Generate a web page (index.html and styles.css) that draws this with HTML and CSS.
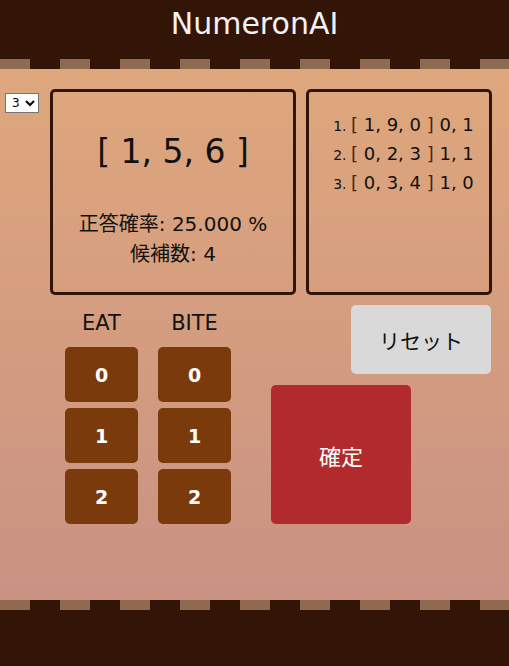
FILE: index.html
```html
<!DOCTYPE html>
<html lang="ja">
  <head>
    <meta charset="utf-8"/>
    <title>NumeronAI</title>
    <link rel="stylesheet" href="styles.css">
  </head>
  <body>
    <header>
      <h1>NumeronAI</h1>
    </header>
    <div class="stripe"></div>

    <main>
      <div class="row top">
        <select class="digits">
          <option>3</option>
          <option>4</option>
        </select>

        <div class="card guess">
          <div class="guessNum">[ 1, 5, 6 ]</div>
          <div class="info">正答確率: 25.000 %</div>
          <div class="info">候補数: 4</div>
        </div>

        <div class="card history">
          <ol>
            <li><span class="br">[</span> 1, 9, 0 <span class="br">]</span> 0, 1</li>
            <li><span class="br">[</span> 0, 2, 3 <span class="br">]</span> 1, 1</li>
            <li><span class="br">[</span> 0, 3, 4 <span class="br">]</span> 1, 0</li>
          </ol>
        </div>
      </div>

      <div class="row bottom">
        <div class="counter">
          <div class="label">EAT</div>
          <button class="num">0</button>
          <button class="num">1</button>
          <button class="num">2</button>
        </div>
        <div class="counter">
          <div class="label">BITE</div>
          <button class="num">0</button>
          <button class="num">1</button>
          <button class="num">2</button>
        </div>
        <div class="actions">
          <button class="reset">リセット</button>
          <button class="submit">確定</button>
        </div>
      </div>
    </main>

    <div class="stripe"></div>
    <footer></footer>
  </body>
</html>
```

FILE: styles.css
```css
* {
  box-sizing: border-box;
}

html, body {
  margin: 0;
  height: 100%;
}

body {
  display: flex;
  flex-direction: column;
  font-family: "DejaVu Sans", "Noto Sans CJK JP", sans-serif;
  color: #111;
  background-color: #331507;
}

header {
  height: 59px;
  background-color: #331507;
  color: #f2f2f2;
  text-align: center;
}

header h1 {
  margin: 0;
  font-size: 30px;
  font-weight: normal;
  line-height: 48px;
}

/* checkered border between header/footer and content */
.stripe {
  height: 10px;
  background: repeating-linear-gradient(to right, #8f6a50 0px, #8f6a50 30px, #331507 30px, #331507 60px);
}

main {
  flex: 1;
  padding-top: 20px;
  background: linear-gradient(to bottom, #dfa77c, #c99283);
}

footer {
  height: 56px;
  background-color: #331507;
}

.row {
  display: flex;
}

.digits {
  margin: 4px 0 0 5px;
  width: 34px;
  height: 20px;
  padding: 0 0 0 2px;
  background-color: white;
  border: 1px solid #767676;
  border-radius: 0;
  font-family: "DejaVu Sans", sans-serif;
  font-size: 12px;
  align-self: flex-start;
}

.card {
  border: 3px solid #331507;
  border-radius: 5px;
  height: 206px;
}

.guess {
  margin-left: 11px;
  width: 246px;
  text-align: center;
  padding-top: 38px;
}

.guessNum {
  font-size: 33px;
  line-height: 44px;
  margin-bottom: 35px;
}

.info {
  font-size: 20px;
  line-height: 30px;
}

.history {
  margin-left: 10px;
  width: 186px;
}

.history ol {
  margin: 18px 0 0 0;
  padding-left: 42px;
  font-size: 18px;
  line-height: 29px;
}

.history li::marker {
  font-size: 14px;
}

.br {
  color: #4a2412;
}

.bottom {
  margin-top: 10px;
}

.counter {
  display: flex;
  flex-direction: column;
  gap: 6px;
  width: 73px;
  margin-left: 20px;
}

.counter:first-child {
  margin-left: 65px;
}

.label {
  text-align: center;
  font-size: 21px;
  line-height: 36px;
}

button {
  border: none;
  border-radius: 5px;
  font-family: "DejaVu Sans", "Noto Sans CJK JP", sans-serif;
  cursor: pointer;
}

.num {
  height: 55px;
  background-color: #7a3a0c;
  color: white;
  font-size: 19px;
  font-weight: bold;
}

.actions {
  display: flex;
  flex-direction: column;
  gap: 11px;
  width: 220px;
  margin-left: 40px;
}

.reset {
  align-self: flex-end;
  width: 140px;
  height: 69px;
  background-color: #d9d9d9;
  color: #111;
  font-size: 21px;
}

.submit {
  width: 140px;
  height: 139px;
  background-color: #b12b2e;
  color: white;
  font-size: 22px;
}
```
